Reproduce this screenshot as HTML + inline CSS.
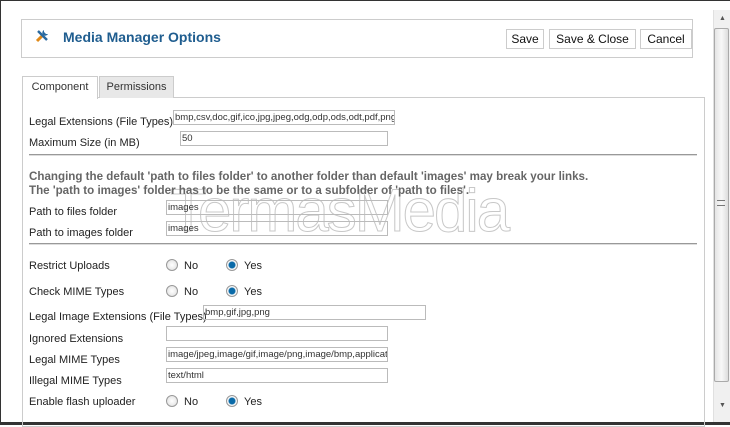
<!DOCTYPE html>
<html><head><style>
*{margin:0;padding:0;box-sizing:border-box}
body{width:730px;height:425px;overflow:hidden;background:#fff;font-family:"Liberation Sans",Arial,sans-serif;font-size:11px;color:#222;position:relative}
.a{position:absolute}
.frame{left:0;top:0;width:730px;height:425px;border:1px solid #333;border-bottom:3px solid #333;border-right:none}
.hdr{left:21px;top:19px;width:672px;height:39px;border:1px solid #ccc}
.btn{top:29px;height:20px;border:1px solid #ccc;background:#fff;font-size:12px;text-align:center;line-height:18px;color:#111}
.tab{top:76px;height:22px;border:1px solid #ccc;border-bottom:none;font-size:11px;text-align:center;line-height:21px;color:#333}
.box{left:22px;top:97px;width:683px;height:330px;border:1px solid #ccc}
.lbl{left:29px;font-size:11px;color:#222}
.in{height:15px;border:1px solid #bbb;font-size:9.5px;line-height:13px;padding-left:1px;overflow:hidden;white-space:nowrap;color:#333}
.hr{left:29px;width:668px;height:2px;background:#999;border-bottom:1px solid #ddd}
.rad{width:12px;height:12px;border-radius:50%;border:1px solid #999;background:radial-gradient(#fff,#ddd)}
.rad.on{background:radial-gradient(circle,#0a6aa8 0 3px,#fff 4px,#ddd 6px)}
.rt{font-size:11px}
.note{left:29px;font-size:11.6px;font-weight:bold;color:#666;white-space:nowrap}
</style></head><body>
<div class="a frame"></div>
<div class="a hdr"></div>
<svg class="a" style="left:35px;top:29px" width="14" height="14" viewBox="0 0 14 14"><path d="M2 12 L8 6" stroke="#e08a1a" stroke-width="3"/><path d="M3 2 L12 11" stroke="#2a6aa0" stroke-width="2.5"/><path d="M9 1 A3 3 0 1 0 13 5 L11 5 L9 3Z" fill="#2a6aa0"/></svg>
<div class="a" style="left:63px;top:29px;font-size:14px;font-weight:bold;color:#1f5d8f">Media Manager Options</div>
<div class="a btn" style="left:506px;width:38px">Save</div>
<div class="a btn" style="left:549px;width:87px">Save &amp; Close</div>
<div class="a btn" style="left:640px;width:52px">Cancel</div>
<div class="a box"></div>
<div class="a tab" style="left:22px;width:76px;background:#fff;height:23px">Component</div>
<div class="a tab" style="left:99px;width:75px;background:#e8e8e8">Permissions</div>

<div class="a" style="left:170px;top:176px;font-size:60px;line-height:70px;color:#fff;-webkit-text-stroke:1px #c8c8c8;letter-spacing:-2px;transform:scaleX(1.0);transform-origin:left;white-space:nowrap">TermasMedia</div>

<div class="a lbl" style="top:116px">Legal Extensions (File Types)</div>
<div class="a in" style="left:173px;top:110px;width:222px">bmp,csv,doc,gif,ico,jpg,jpeg,odg,odp,ods,odt,pdf,png</div>
<div class="a lbl" style="top:137px">Maximum Size (in MB)</div>
<div class="a in" style="left:180px;top:131px;width:208px">50</div>
<div class="a hr" style="top:154px"></div>
<div class="a note" style="top:170px">Changing the default 'path to files folder' to another folder than default 'images' may break your links.</div>
<div class="a note" style="top:184px">The 'path to images' folder has to be the same or to a subfolder of 'path to files'.</div>
<div class="a lbl" style="top:206px">Path to files folder</div>
<div class="a in" style="left:166px;top:200px;width:222px;background:transparent">images</div>
<div class="a lbl" style="top:227px">Path to images folder</div>
<div class="a in" style="left:166px;top:221px;width:222px;background:transparent">images</div>
<div class="a hr" style="top:243px"></div>

<div class="a lbl" style="top:260px">Restrict Uploads</div>
<div class="a rad" style="left:166px;top:259px"></div><div class="a rt" style="left:184px;top:260px">No</div>
<div class="a rad on" style="left:226px;top:259px"></div><div class="a rt" style="left:244px;top:260px">Yes</div>
<div class="a lbl" style="top:286px">Check MIME Types</div>
<div class="a rad" style="left:166px;top:285px"></div><div class="a rt" style="left:184px;top:286px">No</div>
<div class="a rad on" style="left:226px;top:285px"></div><div class="a rt" style="left:244px;top:286px">Yes</div>
<div class="a lbl" style="top:311px">Legal Image Extensions (File Types)</div>
<div class="a in" style="left:203px;top:305px;width:223px">bmp,gif,jpg,png</div>
<div class="a lbl" style="top:333px">Ignored Extensions</div>
<div class="a in" style="left:166px;top:326px;width:222px"></div>
<div class="a lbl" style="top:354px">Legal MIME Types</div>
<div class="a in" style="left:166px;top:347px;width:222px">image/jpeg,image/gif,image/png,image/bmp,application/x-shockwave-flash</div>
<div class="a lbl" style="top:375px">Illegal MIME Types</div>
<div class="a in" style="left:166px;top:368px;width:222px">text/html</div>
<div class="a lbl" style="top:396px">Enable flash uploader</div>
<div class="a rad" style="left:166px;top:395px"></div><div class="a rt" style="left:184px;top:396px">No</div>
<div class="a rad on" style="left:226px;top:395px"></div><div class="a rt" style="left:244px;top:396px">Yes</div>

<div class="a" style="left:713px;top:10px;width:17px;height:412px;background:#f0f0f0;border-left:1px solid #e0e0e0"></div>
<div class="a" style="left:719px;top:15px;font-size:7px;color:#555">▲</div>
<div class="a" style="left:714px;top:28px;width:15px;height:354px;background:linear-gradient(90deg,#e4e4e4,#f8f8f8,#ddd);border:1px solid #aaa;border-radius:2px"></div>
<div class="a" style="left:717px;top:200px;width:8px;height:6px;border-top:1px solid #777;border-bottom:1px solid #777"></div>
<div class="a" style="left:719px;top:402px;font-size:7px;color:#555">▼</div>
</body></html>
